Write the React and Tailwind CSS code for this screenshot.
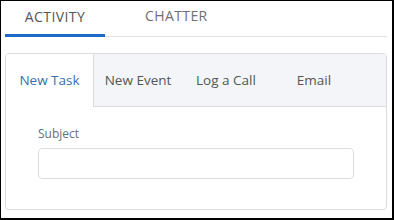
import React from "react";

export default function App() {
  const tabs = ["New Task", "New Event", "Log a Call", "Email"];
  return (
    <div
      className="w-[394px] h-[220px] bg-white border-l border-t border-r-2 border-b-2 border-black overflow-hidden"
      style={{ fontFamily: '"Open Sans", "Liberation Sans", sans-serif' }}
    >
      <div className="pl-[4px] pr-[5px]">
        <div className="flex h-[36px] border-b border-[#e0e0e0]">
          <div className="w-[100px] flex items-center justify-center border-b-[3px] border-[#1b6ac9] -mb-px pb-[3px] text-[14px] tracking-[0.4px] text-[#555555]">
            ACTIVITY
          </div>
          <div className="ml-[40px] flex items-center pb-[6px] text-[14px] tracking-[0.4px] text-[#707070]">
            CHATTER
          </div>
        </div>
        <div className="mt-[16px] h-[157px] border border-[#dcdcdc] rounded-[4px] overflow-hidden">
          <div className="flex h-[53px] bg-[#f4f5f8]">
            {tabs.map((t, i) => (
              <div
                key={t}
                className={
                  i === 0
                    ? "w-[88px] flex items-center justify-center bg-white border-r border-[#dcdcdc] text-[13.5px] text-[#3a6ead]"
                    : "w-[88px] flex items-center justify-center border-b border-[#dcdcdc] text-[13.5px] text-[#555555]"
                }
              >
                {t}
              </div>
            ))}
            <div className="flex-1 border-b border-[#dcdcdc]" />
          </div>
          <div className="px-8 pt-[18px]">
            <div className="text-[12px] leading-[18px] text-[#666e78]">Subject</div>
            <div className="mt-[5px] h-[31px] border border-[#dcdcdc] rounded-[4px] bg-white" />
          </div>
        </div>
      </div>
    </div>
  );
}
